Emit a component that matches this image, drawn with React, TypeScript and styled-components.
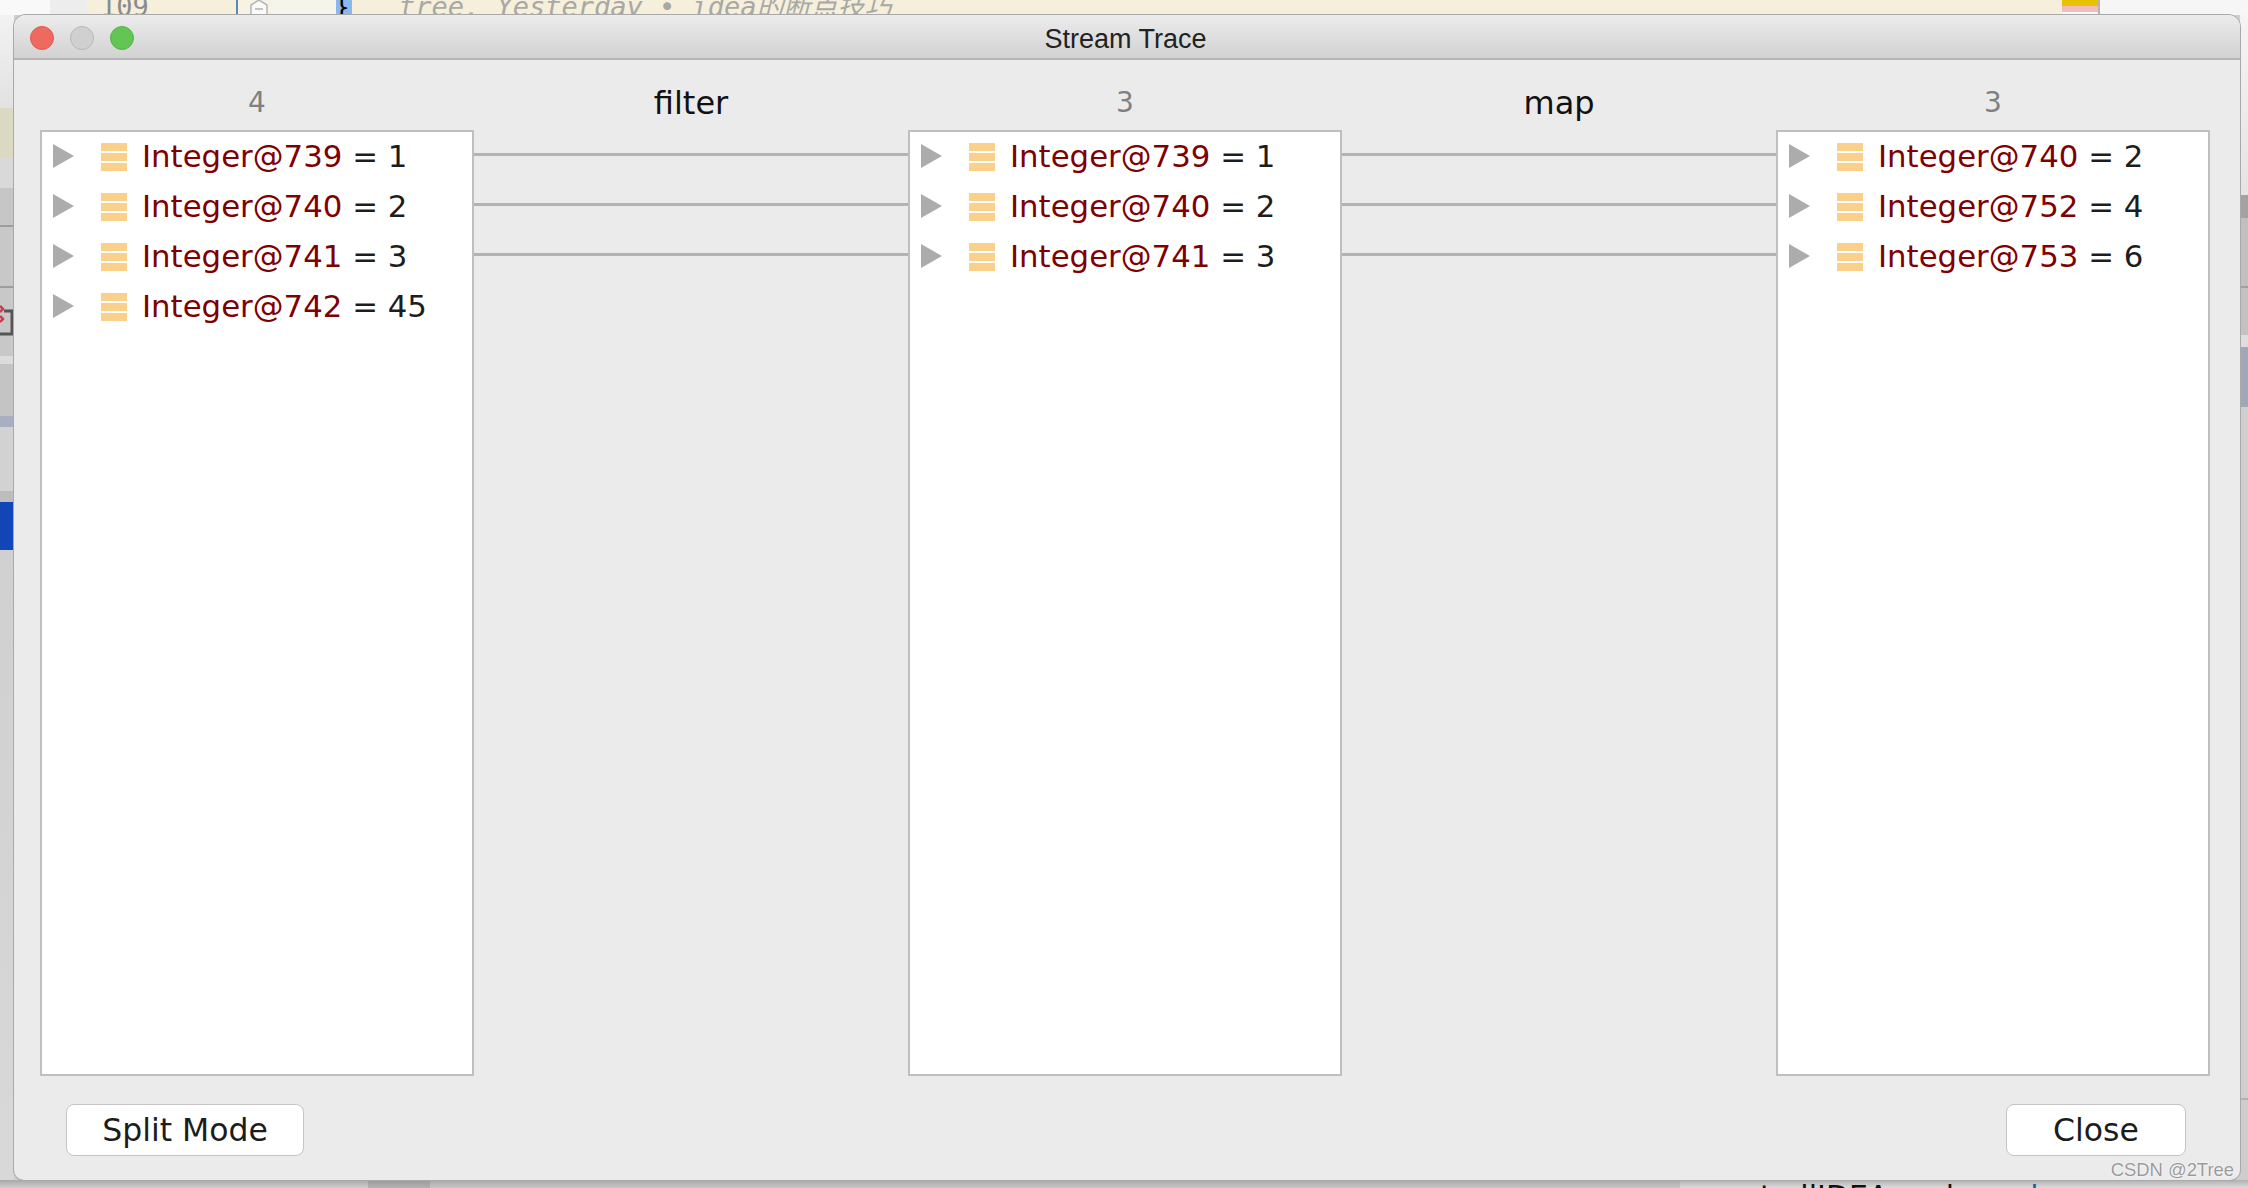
import React from "react";
import styled, { createGlobalStyle } from "styled-components";

const Global = createGlobalStyle`
  html, body { margin: 0; padding: 0; background: #cfcfcf; overflow: hidden; }
  * { box-sizing: border-box; }
`;

const Desktop = styled.div`
  width: 2248px;
  height: 1188px;
  display: grid;
  grid-template-columns: 14px 2226px 8px;
  grid-template-rows: 15px 1165px 8px;
  overflow: hidden;
  font-family: "DejaVu Sans", sans-serif;
`;

const TopStrip = styled.div`
  grid-column: 1 / 4;
  display: flex;
  height: 15px;
  overflow: hidden;
  background: #f8f8f8;
`;

const TopCell = styled.div<{ $w: number; $bg: string }>`
  flex: 0 0 ${(p) => p.$w}px;
  height: 15px;
  background: ${(p) => p.$bg};
  position: relative;
  overflow: hidden;
`;

const LineNumber = styled.span`
  display: block;
  font-family: "DejaVu Sans Mono", monospace;
  font-size: 27px;
  line-height: 26px;
  margin: -6px 0 0 13px;
  color: #8b8b8b;
`;

const FoldMark = styled.svg`
  display: block;
  margin-left: 12px;
  width: 18px;
  height: 15px;
`;

const Brace = styled.span`
  display: block;
  font-family: "DejaVu Sans Mono", monospace;
  font-size: 26px;
  line-height: 26px;
  margin: -6px 0 0 -2px;
  color: #000;
`;

const GhostText = styled.span`
  display: block;
  font-family: "DejaVu Sans Mono", "Noto Sans CJK SC", monospace;
  font-size: 27px;
  line-height: 30px;
  font-style: italic;
  white-space: nowrap;
  margin: -8px 0 0 47px;
  color: #a8a8a4;
`;

const StripeMark = styled.div`
  flex: 0 0 36px;
  height: 12px;
  background: linear-gradient(#e6c200 0 6px, #f3bcbc 6px 12px);
`;

const SideStrip = styled.div`
  display: flex;
  flex-direction: column;
  overflow: hidden;
`;

const Seg = styled.div<{ $h: number; $bg: string }>`
  flex: 0 0 ${(p) => p.$h}px;
  background: ${(p) => p.$bg};
`;

const FillSeg = styled.div<{ $bg: string }>`
  flex: 1;
  background: ${(p) => p.$bg};
`;

const ErrorGlyph = styled.svg`
  display: block;
  width: 14px;
  height: 68px;
`;

const BottomStrip = styled.div`
  grid-column: 1 / 4;
  display: flex;
  height: 8px;
  overflow: hidden;
  background: #c4c4c4;
`;

const BottomCell = styled.div<{ $w: number; $bg: string }>`
  flex: 0 0 ${(p) => p.$w}px;
  height: 8px;
  overflow: hidden;
  background: ${(p) => p.$bg};
`;

const BottomText = styled.span`
  display: block;
  font-family: "DejaVu Sans", sans-serif;
  font-size: 30px;
  line-height: 30px;
  margin: 2px 0 0 80px;
  color: #111;
  white-space: pre;
`;

const BlueTail = styled.span`
  color: #1a5fb4;
`;

const Window = styled.div`
  position: relative;
  display: flex;
  flex-direction: column;
  background: #ebebeb;
  border-radius: 12px 12px 10px 10px;
  box-shadow: 0 0 0 1px #a9a9a9;
  overflow: hidden;
`;

const TitleBar = styled.div`
  flex: 0 0 45px;
  display: flex;
  align-items: center;
  justify-content: center;
  padding: 5px 3px 0 0;
  position: relative;
  background: linear-gradient(#ececec, #d2d2d2);
  border-bottom: 2px solid #b5b5b5;
`;

const Lights = styled.div`
  position: absolute;
  left: 16px;
  top: 11px;
  display: flex;
  gap: 16px;
`;

const Light = styled.span<{ $bg: string; $bd: string }>`
  width: 24px;
  height: 24px;
  border-radius: 50%;
  background: ${(p) => p.$bg};
  border: 1px solid ${(p) => p.$bd};
`;

const Title = styled.span`
  font-family: "Liberation Sans", sans-serif;
  font-size: 27px;
  color: #222;
`;

const Body = styled.div`
  flex: 1;
  display: flex;
  flex-direction: column;
  padding: 0 30px 24px 26px;
`;

const Columns = styled.div`
  display: grid;
  grid-template-columns: 434px 1fr 434px 1fr 434px;
  grid-template-rows: 70px 946px;
`;

const Heading = styled.div<{ $muted?: boolean }>`
  display: flex;
  align-items: flex-end;
  justify-content: center;
  padding-bottom: 7px;
  font-size: ${(p) => (p.$muted ? 28 : 32)}px;
  line-height: 40px;
  color: ${(p) => (p.$muted ? "#808080" : "#111")};
`;

const Panel = styled.div`
  background: #fff;
  border: 2px solid #bfbfbf;
`;

const Row = styled.div`
  height: 50px;
  display: flex;
  align-items: center;
  padding-left: 11px;
`;

const Arrow = styled.svg`
  flex: none;
  width: 22px;
  height: 24px;
  margin-top: -2px;
  fill: #acacac;
`;

const Stack = styled.svg`
  flex: none;
  width: 28px;
  height: 30px;
  margin-left: 25px;
  fill: #fbd08a;
`;

const Label = styled.span`
  margin: -2px 0 0 14px;
  font-size: 30.8px;
  white-space: nowrap;
  color: #1d1d1d;
`;

const Ref = styled.span`
  color: #7f0000;
`;

const Links = styled.div`
  padding-top: 1px;
`;

const Link = styled.div`
  height: 50px;
  display: flex;
  align-items: center;
  &::before {
    content: "";
    flex: 1;
    height: 3px;
    margin-top: -3px;
    background: #b3b3b3;
  }
`;

const Footer = styled.div`
  flex: 0 0 52px;
  display: flex;
  justify-content: space-between;
  margin-top: 28px;
  padding: 0 24px 0 26px;
`;

const Button = styled.button<{ $w: number }>`
  width: ${(p) => p.$w}px;
  height: 52px;
  background: #fff;
  border: 1.5px solid #c4c4c4;
  border-radius: 8px;
  font-family: "DejaVu Sans", sans-serif;
  font-size: 31.5px;
  color: #1c1c1c;
  padding: 0;
`;

const Watermark = styled.span`
  position: absolute;
  right: 6px;
  bottom: -1px;
  font-family: "Liberation Sans", sans-serif;
  font-size: 18.4px;
  line-height: 22px;
  color: #9a9a9a;
  text-shadow: 0 0 1px #fff, 0 0 2px #fff;
`;

type Item = [string, string];

const lists: Item[][] = [
  [["Integer@739", "1"], ["Integer@740", "2"], ["Integer@741", "3"], ["Integer@742", "45"]],
  [["Integer@739", "1"], ["Integer@740", "2"], ["Integer@741", "3"]],
  [["Integer@740", "2"], ["Integer@752", "4"], ["Integer@753", "6"]],
];

const TraceList = ({ items }: { items: Item[] }) => (
  <Panel>
    {items.map(([ref, value]) => (
      <Row key={ref}>
        <Arrow viewBox="0 0 22 24">
          <path d="M0 0 L21 12 L0 24 Z" />
        </Arrow>
        <Stack viewBox="0 0 28 30">
          <rect x="1" y="1" width="26" height="8" />
          <rect x="1" y="11" width="26" height="8" />
          <rect x="1" y="21" width="26" height="8" />
        </Stack>
        <Label>
          <Ref>{ref}</Ref> = {value}
        </Label>
      </Row>
    ))}
  </Panel>
);

const Connectors = () => (
  <Links>
    <Link />
    <Link />
    <Link />
  </Links>
);

export default function App() {
  return (
    <>
      <Global />
      <Desktop>
        <TopStrip>
          <TopCell $w={50} $bg="#f9f9f9" />
          <TopCell $w={37} $bg="#ededed" />
          <TopCell $w={149} $bg="#f5efdc">
            <LineNumber>109</LineNumber>
          </TopCell>
          <TopCell $w={2} $bg="#5f86b5" />
          <TopCell $w={34} $bg="#f7f3e4">
            <FoldMark viewBox="0 0 18 15">
              <path d="M1 15 V5 L9 0 L17 5 V15" fill="#fafafa" stroke="#b5b5b5" strokeWidth="1.5" />
              <path d="M5 9 H13" stroke="#b0b0b0" strokeWidth="1.5" />
            </FoldMark>
          </TopCell>
          <TopCell $w={64} $bg="#f5f5ec" />
          <TopCell $w={16} $bg="#8ab8ee">
            <Brace>{"}"}</Brace>
          </TopCell>
          <TopCell $w={1710} $bg="#f5efdc">
            <GhostText>tree, Yesterday • idea的断点技巧</GhostText>
          </TopCell>
          <StripeMark />
          <TopCell $w={2} $bg="#b8b4a8" />
          <TopCell $w={148} $bg="#f6f6f6" />
        </TopStrip>

        <SideStrip>
          <FillSeg $bg="linear-gradient(#f2f2f2, #e2e2e2)" />
          <Seg $h={50} $bg="#dcd9c3" />
          <Seg $h={30} $bg="#d9d9d9" />
          <Seg $h={37} $bg="#c6c6c6" />
          <Seg $h={2} $bg="#9d9d9d" />
          <Seg $h={59} $bg="#c8c8c8" />
          <Seg $h={2} $bg="#9d9d9d" />
          <Seg $h={68} $bg="#c8c8c8">
            <ErrorGlyph viewBox="0 0 14 68">
              <path d="M0 18 L3 21 L0 24 M0 28 L3 31 L0 34" fill="none" stroke="#c8404f" strokeWidth="2.5" />
              <path d="M4 23 H14 M12 23 V46 M0 46 H14" fill="none" stroke="#555" strokeWidth="3" />
            </ErrorGlyph>
          </Seg>
          <Seg $h={8} $bg="#dcdcdc" />
          <Seg $h={52} $bg="#c4c4c4" />
          <Seg $h={11} $bg="#a8afc0" />
          <Seg $h={64} $bg="#d2d2d2" />
          <Seg $h={11} $bg="#bdbdbd" />
          <Seg $h={48} $bg="#1245b8" />
          <Seg $h={630} $bg="linear-gradient(#d0d0d0, #d8d8d8)" />
        </SideStrip>

        <Window>
          <TitleBar>
            <Lights>
              <Light $bg="#ee6a5f" $bd="#e0584d" />
              <Light $bg="#d0d0d0" $bd="#b8b8b8" />
              <Light $bg="#62c554" $bd="#55b548" />
            </Lights>
            <Title>Stream Trace</Title>
          </TitleBar>
          <Body>
            <Columns>
              <Heading $muted>4</Heading>
              <Heading>filter</Heading>
              <Heading $muted>3</Heading>
              <Heading>map</Heading>
              <Heading $muted>3</Heading>
              <TraceList items={lists[0]} />
              <Connectors />
              <TraceList items={lists[1]} />
              <Connectors />
              <TraceList items={lists[2]} />
            </Columns>
            <Footer>
              <Button $w={238}>Split Mode</Button>
              <Button $w={180}>Close</Button>
            </Footer>
          </Body>
          <Watermark>CSDN @2Tree</Watermark>
        </Window>

        <SideStrip>
          <Seg $h={180} $bg="linear-gradient(#f4f4f4, #e4e4e4)" />
          <Seg $h={23} $bg="#a2a2a2" />
          <Seg $h={68} $bg="#c0c0c0" />
          <Seg $h={2} $bg="#a0a0a0" />
          <Seg $h={47} $bg="#c2c2c2" />
          <Seg $h={12} $bg="#dedede" />
          <Seg $h={60} $bg="#9fa7b8" />
          <Seg $h={691} $bg="#cfcfcf" />
          <Seg $h={2} $bg="#b0b0b0" />
          <FillSeg $bg="#cdcdcd" />
        </SideStrip>

        <BottomStrip>
          <BottomCell $w={368} $bg="linear-gradient(#a8a8a8, #cfcfcf)" />
          <BottomCell $w={62} $bg="linear-gradient(#9a9a9a, #b2b2b2)" />
          <BottomCell $w={1250} $bg="linear-gradient(#a8a8a8, #c6c6c6)" />
          <BottomCell $w={568} $bg="linear-gradient(#b0b0b0, #dcdcdc)">
            <BottomText>
              {"t   llIDEA      l        "}
              <BlueTail>l</BlueTail>
            </BottomText>
          </BottomCell>
        </BottomStrip>
      </Desktop>
    </>
  );
}
